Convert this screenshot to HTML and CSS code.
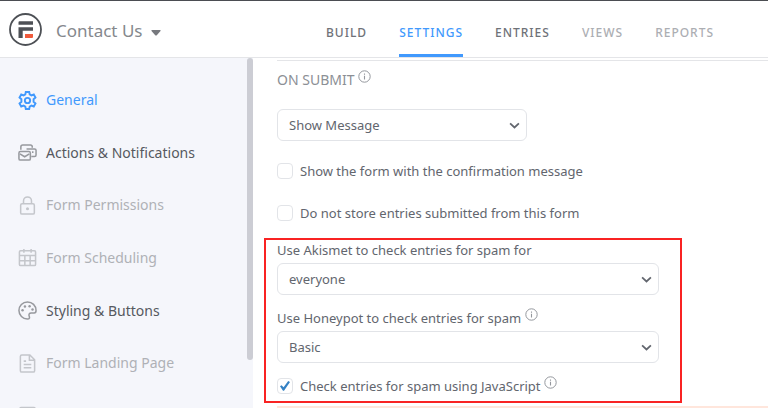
FILE: index.html
```html
<!DOCTYPE html>
<html lang="en">
<head>
<meta charset="utf-8">
<meta name="viewport" content="width=device-width, initial-scale=1">
<title>Contact Us</title>
<link rel="stylesheet" href="styles.css">
</head>
<body>
<svg class="defs" aria-hidden="true">
  <symbol id="info" viewBox="0 0 13 13"><circle cx="6.5" cy="6.5" r="5.7" fill="none" stroke="currentColor"/><path d="M6.5 5.8v3.6M6.5 3.6v1.2" stroke="currentColor" stroke-width="1.1"/></symbol>
  <symbol id="chevron" viewBox="0 0 10 6"><path d="M1 1l4 3.8L9 1" fill="none" stroke="currentColor" stroke-width="1.6"/></symbol>
</svg>
<header class="topbar">
  <a class="logo" href="#" aria-label="Forms home">
    <svg viewBox="0 0 33 33" width="33" height="33"><circle cx="16.5" cy="16.5" r="15.5" fill="#fff" stroke="#4d5055" stroke-width="1.8"/><path fill="#4d5055" d="M10.5 8.2H24v3.5H9.5V9.2a1 1 0 0 1 1-1zM9.5 14.2H24v3.6H13.7V25H9.5z"/><path fill="#f05a3c" d="M16 20.9h8V24a1 1 0 0 1-1 1h-7z"/></svg>
  </a>
  <button class="form-name" type="button">Contact Us
    <svg viewBox="0 0 10 6" width="10" height="6"><path d="M1 0h8q1 .2.5 1L5.8 5.2q-.8.8-1.6 0L.5 1Q0 .2 1 0z" fill="currentColor"/></svg>
  </button>
  <nav class="tabs">
    <a href="#">BUILD</a>
    <a class="active" href="#">SETTINGS</a>
    <a href="#">ENTRIES</a>
    <a class="muted" href="#">VIEWS</a>
    <a class="muted" href="#">REPORTS</a>
  </nav>
</header>
<div class="workspace">
  <aside class="sidebar">
    <nav class="menu">
      <a class="active" href="#"><svg viewBox="0 0 20 20"><path d="M8.200 1h3.600l.5 2.600 1.800 1 2.500-.9 1.800 3.100-2 1.800v2.800l2 1.800-1.800 3.100-2.500-.9-1.800 1-.5 2.600H8.200l-.5-2.600-1.800-1-2.500.9-1.800-3.100 2-1.800V8.600l-2-1.800 1.800-3.100 2.500.9 1.800-1z"/><circle cx="10" cy="10" r="2.800"/></svg>General</a>
      <a href="#"><svg viewBox="0 0 20 20"><path d="M3 7V4.200Q3 2 5 2h8q2 0 2 2v1M9 6.200h8.500q1.500 0 1.500 1.500v5q0 1.500-1.500 1.500H14M15.500 8.800v1.800"/><rect x="1" y="9" width="12" height="9" rx="1.500"/><path d="M2 11.500l5 3 5-3"/></svg>Actions &amp; Notifications</a>
      <a class="muted" href="#"><svg viewBox="0 0 20 20"><rect x="2.800" y="8.200" width="14.400" height="10.800" rx="1.500"/><path d="M5.800 8V5.200a4.200 4.200 0 0 1 8.400 0V8"/><circle class="dot" cx="10" cy="13.500" r="1.600"/></svg>Form Permissions</a>
      <a class="muted" href="#"><svg viewBox="0 0 20 20"><rect x="1.500" y="3" width="17" height="15.500" rx="1.200"/><path d="M1.500 8h17M1.500 13.300h17M7.200 8v10.500M12.800 8v10.500M6.200 1v4M13.800 1v4"/></svg>Form Scheduling</a>
      <a href="#"><svg viewBox="0 0 20 20"><path d="M10 1C4.800 1 1 5 1 10s4 9 8.800 9c2.600 0 2.600-1.700 2-3-.8-1.800.2-3.400 2-3.400H17c1.500 0 2-1.200 2-2.600C19 4.800 15 1 10 1z"/><circle class="dot" cx="4.800" cy="9.800" r="1.300"/><circle class="dot" cx="7.300" cy="5.800" r="1.300"/><circle class="dot" cx="12.200" cy="5.500" r="1.300"/><circle class="dot" cx="15.300" cy="9" r="1.300"/></svg>Styling &amp; Buttons</a>
      <a class="muted" href="#"><svg viewBox="0 0 20 20"><path d="M4 1h8.500L17.500 6v11.500q0 1.500-1.500 1.500H4q-1.500 0-1.500-1.500v-15Q2.500 1 4 1zM12 1v5.500h5.500M6 7.500h2.500M6 11h8M6 14.500h8"/></svg>Form Landing Page</a>
      <a class="muted" href="#" aria-label="More settings"><svg viewBox="0 0 20 20"><rect x="2" y="1.500" width="16" height="17" rx="1.500"/><path d="M6 7h8M6 11h8"/></svg></a>
    </nav>
    <div class="scroll-thumb"></div>
  </aside>
  <main class="content">
    <h2>ON SUBMIT <svg class="info"><use href="#info"/></svg></h2>
    <div class="select short">
      <select aria-label="On submit"><option>Show Message</option></select>
      <svg><use href="#chevron"/></svg>
    </div>
    <label class="check"><input type="checkbox">Show the form with the confirmation message</label>
    <label class="check"><input type="checkbox">Do not store entries submitted from this form</label>
    <section class="highlight">
      <label class="caption" for="akismet">Use Akismet to check entries for spam for</label>
      <div class="select">
        <select id="akismet"><option>everyone</option></select>
        <svg><use href="#chevron"/></svg>
      </div>
      <label class="caption" for="honeypot">Use Honeypot to check entries for spam <svg class="info"><use href="#info"/></svg></label>
      <div class="select">
        <select id="honeypot"><option>Basic</option></select>
        <svg><use href="#chevron"/></svg>
      </div>
      <label class="check"><input type="checkbox" checked><span>Check entries for spam using JavaScript <svg class="info"><use href="#info"/></svg></span></label>
    </section>
    <div class="notice"></div>
  </main>
</div>
</body>
</html>
```
FILE: styles.css
```css
* { box-sizing: border-box; }
body {
  margin: 0;
  height: 100vh;
  overflow: hidden;
  display: flex;
  flex-direction: column;
  border-top: 1px solid #4b4d52;
  background: #fff;
  color: #62666e;
  font: 14px/20px "Noto Sans", "Open Sans", sans-serif;
}
a { color: inherit; text-decoration: none; }
.defs { position: absolute; width: 0; height: 0; }

.topbar {
  flex: none;
  display: flex;
  height: 57px;
  padding-left: 9px;
  border-bottom: 1px solid #e4e5e8;
}
.logo { padding-top: 12px; }
.form-name {
  display: flex;
  align-items: center;
  gap: 8px;
  width: 284px;
  padding: 3px 0 0 14px;
  border: 0;
  background: none;
  color: #85888d;
  font: inherit;
  font-size: 17px;
}
.form-name svg { color: #77797e; margin-top: 4px; }
.tabs {
  display: flex;
  gap: 32px;
  font-size: 12px;
  font-weight: 500;
  letter-spacing: 1px;
  color: #6f7278;
}
.tabs a { padding-top: 22px; border-bottom: 3px solid transparent; }
.tabs .active { color: #4199fd; border-color: #4199fd; }
.tabs .muted { color: #acaeb3; }

.workspace { flex: 1; min-height: 0; display: flex; }
.sidebar {
  flex: none;
  width: 253px;
  display: flex;
  justify-content: space-between;
  background: #f5f6fb;
}
.menu {
  display: grid;
  grid-auto-rows: 1fr;
  height: 368px;
  margin-top: 16px;
  padding-left: 18px;
}
.menu a { display: flex; align-items: center; gap: 9px; color: #56595f; }
.menu svg {
  width: 19px;
  height: 19px;
  fill: none;
  stroke: currentColor;
  stroke-width: 1.6;
  color: #97999e;
}
.menu .dot { fill: currentColor; stroke: none; }
.menu .muted { color: #afb1b6; }
.menu .muted svg { color: #c4c6cb; }
.menu .active, .menu .active svg { color: #4199fd; stroke-width: 2; }
.scroll-thumb { width: 6px; height: 302px; border-radius: 3px; background: #cccdd4; }

.content { flex: 1; min-width: 0; padding: 2px 0 0 24px; font-size: 13px; }
h2 {
  margin: 0 0 19px;
  padding-top: 9px;
  border-top: 1px solid #e4e5e8;
  color: #8c8f95;
  font-size: 14px;
  font-weight: 400;
}
.info { width: 13px; height: 13px; color: #94979d; vertical-align: 6px; margin: -9px 0 -4px; }
.select { position: relative; max-width: 382px; margin-bottom: 13px; }
.short { max-width: 250px; margin-bottom: 20px; }
.select select {
  appearance: none;
  display: block;
  width: 100%;
  height: 32px;
  padding: 0 30px 0 11px;
  border: 1px solid #e2e4e8;
  border-radius: 6px;
  background: #fff;
  color: inherit;
  font: inherit;
}
.select svg { position: absolute; right: 7px; top: 13px; width: 11px; height: 7px; pointer-events: none; }
.check { display: flex; align-items: center; gap: 7px; margin-bottom: 22px; }
.check input {
  appearance: none;
  flex: none;
  display: grid;
  place-items: center;
  width: 16px;
  height: 16px;
  margin: 0;
  border: 1px solid #e2e4e8;
  border-radius: 4px;
  background: #fff;
}
.check input:checked::before {
  content: "";
  width: 10px;
  height: 10px;
  background: #3582c4;
  clip-path: polygon(0 52%, 15% 42%, 36% 62%, 82% 0, 100% 10%, 40% 98%, 30% 98%);
}
.highlight {
  width: 418px;
  max-width: 100%;
  margin: -7px 0 3px -13px;
  padding: 0 21px 5px 11px;
  border: 2px solid #f92323;
}
.caption { display: block; height: 23px; }
.highlight .check { height: 20px; margin: 0; }
.notice { height: 20px; background: #ffe6dc; }
```
